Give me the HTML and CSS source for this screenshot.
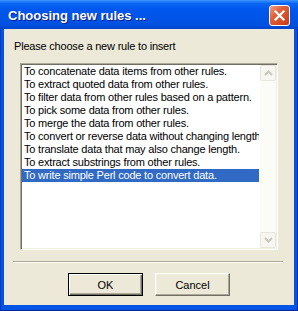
FILE: index.html
```html
<!DOCTYPE html>
<html lang="en">
<head>
    <meta charset="UTF-8">
    <title>Choosing new rules ...</title>
    <link rel="stylesheet" href="styles.css">
</head>
<body>
    <!-- dialog window -->
    <div class="window">
        <div class="titlebar">
            <span class="title">Choosing new rules ...</span>
            <button class="close">
                <svg width="11" height="11" viewBox="0 0 11 11">
                    <path d="M1.5 1.5 L9.5 9.5 M9.5 1.5 L1.5 9.5" stroke="#fff" stroke-width="2.2" stroke-linecap="square"/>
                </svg>
            </button>
        </div>
        <div class="client">
            <p class="prompt">Please choose a new rule to insert</p>
            <!-- list of rules -->
            <div class="listbox">
                <ul class="items">
                    <li>To concatenate data items from other rules.</li>
                    <li>To extract quoted data from other rules.</li>
                    <li>To filter data from other rules based on a pattern.</li>
                    <li>To pick some data from other rules.</li>
                    <li>To merge the data from other rules.</li>
                    <li>To convert or reverse data without changing length.</li>
                    <li>To translate data that may also change length.</li>
                    <li>To extract substrings from other rules.</li>
                    <li class="selected">To write simple Perl code to convert data.</li>
                </ul>
                <div class="scrollbar">
                    <span class="arrow">
                        <svg width="9" height="6" viewBox="0 0 9 6"><path d="M1 5 L4.5 1.5 L8 5" fill="none" stroke="#C9C7BA" stroke-width="2"/></svg>
                    </span>
                    <span class="track"></span>
                    <span class="arrow">
                        <svg width="9" height="6" viewBox="0 0 9 6"><path d="M1 1 L4.5 4.5 L8 1" fill="none" stroke="#C9C7BA" stroke-width="2"/></svg>
                    </span>
                </div>
            </div>
            <hr class="separator">
            <div class="buttons">
                <button class="btn default">OK</button>
                <button class="btn">Cancel</button>
            </div>
        </div>
    </div>
</body>
</html>
```

FILE: styles.css
```css
*{
    margin: 0;
    padding: 0;
    box-sizing: border-box;
}
body{
    font-family: "Liberation Sans", Arial, sans-serif;
    font-size: 11px;
    color: #000;
}
.window{
    width: 298px;
    height: 311px;
    display: flex;
    flex-direction: column;
    background-color: #0055E5;
    box-shadow: inset 1px 0 0 #0038B8, inset -1px -1px 0 #00269A;
}
.titlebar{
    height: 29px;
    display: flex;
    align-items: center;
    justify-content: space-between;
    padding: 0 8px;
    background: linear-gradient(to bottom, #3C95FF 0%, #0A66F2 12%, #0058EE 30%, #0054E6 65%, #0050DE 88%, #0042CC 100%);
}
.title{
    color: #fff;
    font-weight: bold;
    font-size: 13px;
    text-shadow: 1px 1px 0 #0A1A8C;
    padding-top: 1px;
}
.close{
    width: 21px;
    height: 21px;
    display: flex;
    align-items: center;
    justify-content: center;
    border: 1px solid #fff;
    border-radius: 3px;
    background: linear-gradient(135deg, #F0A088 0%, #E2623C 35%, #D24A22 75%, #C03A18 100%);
    margin-top: 1px;
}
.client{
    flex: 1;
    margin: 0 4px 6px 4px;
    padding-top: 11px;
    background-color: #ECE9D8;
    display: flex;
    flex-direction: column;
}
.prompt{
    margin-left: 10px;
    line-height: 13px;
    letter-spacing: -0.2px;
}
.listbox{
    width: 258px;
    height: 187px;
    margin: 10px 0 0 16px;
    padding: 1px;
    display: flex;
    background-color: #fff;
    border: 1px solid;
    border-color: #ACA899 #fff #fff #ACA899;
    box-shadow: inset 1px 1px 0 #716F64, inset -1px -1px 0 #F1EFE2;
}
.items{
    flex: 1;
    list-style: none;
    overflow: hidden;
}
.items li{
    height: 13px;
    line-height: 13px;
    padding-left: 2px;
    margin-right: 1px;
    white-space: nowrap;
    overflow: hidden;
    letter-spacing: -0.2px;
}
.items li.selected{
    background-color: #316AC5;
    color: #fff;
}
.scrollbar{
    width: 16px;
    display: flex;
    flex-direction: column;
    background-color: #FBFBF8;
}
.arrow{
    height: 16px;
    display: flex;
    align-items: center;
    justify-content: center;
    border: 1px solid #E8E6DC;
    border-radius: 2px;
    background-color: #F7F6F1;
}
.track{
    flex: 1;
}
.separator{
    width: 270px;
    height: 2px;
    margin: 11px 0 0 9px;
    border: none;
    border-top: 1px solid #ACA899;
    border-bottom: 1px solid #fff;
}
.buttons{
    display: flex;
    justify-content: center;
    gap: 12px;
    margin-top: 10px;
}
.btn{
    width: 75px;
    height: 23px;
    font: inherit;
    color: #000;
    background-color: #ECE9D8;
    border: 1px solid;
    border-color: #fff #716F64 #716F64 #fff;
    box-shadow: inset -1px -1px 0 #ACA899, inset 1px 1px 0 #F1EFE2;
}
.btn.default{
    border: 1px solid #000;
    box-shadow: inset 1px 1px 0 #fff, inset -1px -1px 0 #716F64, inset -2px -2px 0 #ACA899;
}
```
